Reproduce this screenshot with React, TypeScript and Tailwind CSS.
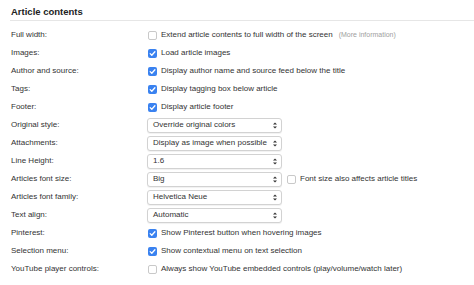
import type { ReactNode } from 'react'

type Row =
  | { label: string; kind: 'check'; checked: boolean; text: string; note?: string }
  | { label: string; kind: 'select'; value: string; extra?: string }

const ROWS: Row[] = [
  { label: 'Full width:', kind: 'check', checked: false, text: 'Extend article contents to full width of the screen', note: '(More information)' },
  { label: 'Images:', kind: 'check', checked: true, text: 'Load article images' },
  { label: 'Author and source:', kind: 'check', checked: true, text: 'Display author name and source feed below the title' },
  { label: 'Tags:', kind: 'check', checked: true, text: 'Display tagging box below article' },
  { label: 'Footer:', kind: 'check', checked: true, text: 'Display article footer' },
  { label: 'Original style:', kind: 'select', value: 'Override original colors' },
  { label: 'Attachments:', kind: 'select', value: 'Display as image when possible' },
  { label: 'Line Height:', kind: 'select', value: '1.6' },
  { label: 'Articles font size:', kind: 'select', value: 'Big', extra: 'Font size also affects article titles' },
  { label: 'Articles font family:', kind: 'select', value: 'Helvetica Neue' },
  { label: 'Text align:', kind: 'select', value: 'Automatic' },
  { label: 'Pinterest:', kind: 'check', checked: true, text: 'Show Pinterest button when hovering images' },
  { label: 'Selection menu:', kind: 'check', checked: true, text: 'Show contextual menu on text selection' },
  { label: 'YouTube player controls:', kind: 'check', checked: false, text: 'Always show YouTube embedded controls (play/volume/watch later)' },
]

function Checkbox({ checked }: { checked: boolean }): ReactNode {
  if (checked) {
    return (
      <span className="flex h-[9px] w-[9px] shrink-0 items-center justify-center rounded-[2px] bg-[#3a82f0]">
        <svg width="7" height="7" viewBox="0 0 7 7">
          <path d="M1.2 3.6 L2.8 5.2 L5.9 1.7" fill="none" stroke="#fff" strokeWidth="1.3" strokeLinecap="round" strokeLinejoin="round" />
        </svg>
      </span>
    )
  }
  return <span className="h-[9px] w-[9px] shrink-0 rounded-[2px] border border-[#c9c9c9] bg-white" />
}

function Select({ value }: { value: string }): ReactNode {
  return (
    <div className="flex h-[15px] w-[135px] items-center justify-between rounded-[3px] border border-[#d2d2d2] bg-white pl-[5px] pr-[4px] shadow-[0_1px_1px_rgba(0,0,0,0.06)]">
      <span>{value}</span>
      <svg width="4" height="7" viewBox="0 0 4 7">
        <path d="M0 2.6 L2 0.4 L4 2.6 Z" fill="#333" />
        <path d="M0 4.4 L2 6.6 L4 4.4 Z" fill="#333" />
      </svg>
    </div>
  )
}

export default function App(): ReactNode {
  return (
    <div className="h-[285px] w-[474px] overflow-hidden bg-white font-['Liberation_Sans',Arial,sans-serif] text-[8px] text-[#333]">
      {/* titre */}
      <div className="ml-[10px] border-b border-[#e6e6e6] pb-[2px] pl-[1px] pt-[6px]">
        <h2 className="text-[9.5px] font-bold leading-[12px] text-[#222]">Article contents</h2>
      </div>

      <div className="mt-[5px] flex flex-col pl-[11px]">
        {ROWS.map((r) => (
          <div key={r.label} className="flex h-[18px] items-center">
            <div className="w-[136px] shrink-0">{r.label}</div>
            {r.kind === 'check' ? (
              <div className="ml-[1px] flex items-center gap-[4px]">
                <Checkbox checked={r.checked} />
                <span>{r.text}</span>
                {r.note && <span className="ml-[2px] text-[7px] text-[#a0a0a0]">{r.note}</span>}
              </div>
            ) : (
              <div className="flex items-center">
                <Select value={r.value} />
                {r.extra && (
                  <div className="ml-[5px] flex items-center gap-[4px]">
                    <Checkbox checked={false} />
                    <span>{r.extra}</span>
                  </div>
                )}
              </div>
            )}
          </div>
        ))}
      </div>
    </div>
  )
}
